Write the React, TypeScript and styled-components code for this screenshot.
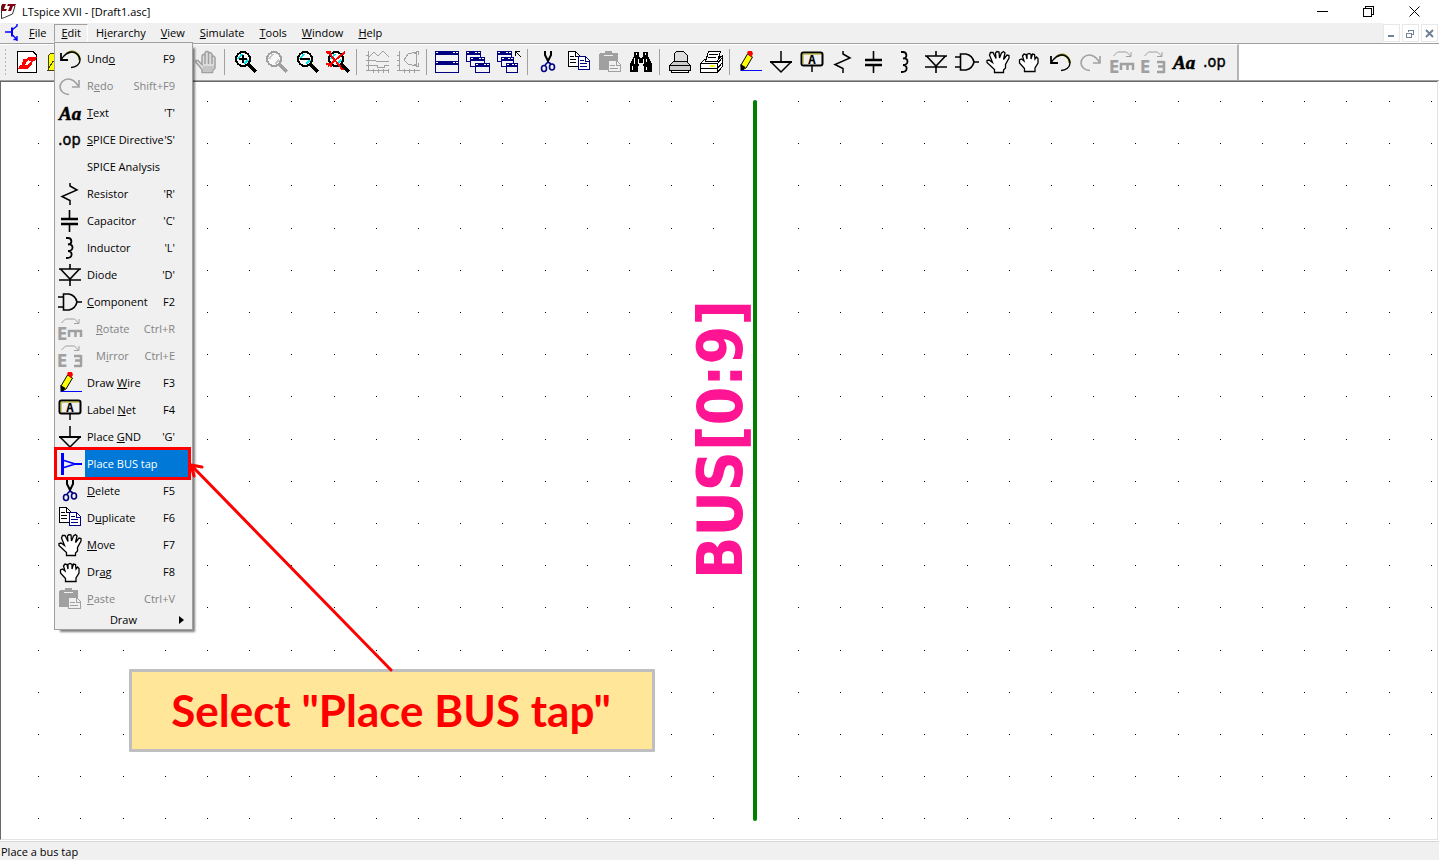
import React from 'react';
import styled, { createGlobalStyle } from 'styled-components';

const GlobalStyle = createGlobalStyle`
  * { box-sizing: border-box; }
  body {
    margin: 0;
    background: #ffffff;
    color: #000000;
    font-family: "Open Sans", "Noto Sans", sans-serif;
    font-size: 11px;
    line-height: 16px;
  }
  button { font: inherit; color: inherit; }
`;

const Window = styled.div`
  position: relative;
  display: flex;
  flex-direction: column;
  min-height: 100vh;
  overflow: hidden;
`;

const TitleBar = styled.header`
  display: flex;
  align-items: center;
  height: 23px;
  background: #ffffff;
`;

const Title = styled.h1`
  flex: 1;
  margin: 0 0 0 6px;
  font-size: 11px;
  font-weight: 400;
`;

const CaptionButtons = styled.div`
  display: flex;
  padding-right: 2px;
`;

const CaptionButton = styled.button`
  display: flex;
  align-items: center;
  justify-content: center;
  width: 46px;
  height: 20px;
  padding: 0;
  border: 0;
  background: transparent;
`;

const MenuBar = styled.nav`
  display: flex;
  align-items: center;
  height: 20px;
  padding-left: 4px;
  background: #f0f0f0;
`;

const MenuList = styled.div`
  display: flex;
  flex: 1;
  gap: 1px;
  padding-left: 2px;
`;

const MenuTitle = styled.button<{ $open?: boolean }>`
  height: 18px;
  padding: 0 6px;
  border: 1px solid transparent;
  border-color: ${(p) => (p.$open ? '#a0a0a0 #ffffff #f0f0f0 #a0a0a0' : 'transparent')};
  background: transparent;
  line-height: 16px;
  white-space: nowrap;
`;

const MdiButtons = styled.div`
  display: flex;
  gap: 2px;
  height: 20px;
  padding: 1px 1px 0 0;
  background: #ffffff;
`;

const MdiButton = styled.button`
  display: flex;
  align-items: center;
  justify-content: center;
  width: 17px;
  height: 18px;
  padding: 0;
  border: 1px solid #e8e8e8;
  background: #ffffff;
`;

const ToolRow = styled.div`
  display: flex;
  height: 37px;
  border-top: 1px solid #a0a0a0;
  background: #ffffff;
`;

const ToolBar = styled.div`
  display: flex;
  align-items: center;
  padding: 0 7px 1px 4px;
  border-top: 1px solid #ffffff;
  border-right: 2px solid #b4b4b4;
  background: #f0f0f0;
`;

const Grip = styled.span`
  width: 7px;
  height: 28px;
  background-image: radial-gradient(circle, #b8b8b8 1px, transparent 1px);
  background-size: 3px 4px;
  background-repeat: repeat-y;
`;

const ToolButton = styled.button`
  display: flex;
  align-items: center;
  justify-content: center;
  flex: none;
  width: 31px;
  height: 28px;
  padding: 0;
  border: 0;
  background: transparent;
`;

const Separator = styled.span`
  flex: none;
  width: 2px;
  height: 26px;
  margin: 0 3px;
  border-left: 1px solid #a0a0a0;
`;

const Sheet = styled.main`
  display: flex;
  flex: 1;
  margin-right: 1px;
  border-top: 1px solid #696969;
  border-left: 1px solid #696969;
  border-right: 1px solid #e3e3e3;
  border-bottom: 1px solid #e3e3e3;
  background: #ffffff;
`;

const SheetEdge = styled.div`
  height: 1px;
  background: #a0a0a0;
`;

const Drawing = styled.svg`
  flex: 1;
  display: block;
  min-width: 0;
  min-height: 757px;
`;

const StatusBar = styled.footer`
  height: 19px;
  margin-top: 1px;
  padding: 2px 1px 0;
  border-top: 1px solid #d7d7d7;
  background: #f0f0f0;
`;

const DropDown = styled.div`
  position: absolute;
  left: 54px;
  top: 42px;
  display: flex;
  flex-direction: column;
  width: 139px;
  padding: 2px 2px 1px 3px;
  border: 1px solid #a0a0a0;
  background: #f0f0f0;
  box-shadow: 4px 4px 2px -2px rgba(0, 0, 0, 0.5);
`;

const Command = styled.button<{ $disabled?: boolean; $selected?: boolean }>`
  display: flex;
  align-items: center;
  height: 27px;
  padding: 0;
  border: 0;
  background: transparent;
  color: ${(p) => (p.$selected ? '#ffffff' : p.$disabled ? '#838383' : '#000000')};
  white-space: nowrap;
  text-align: left;
`;

const IconCell = styled.span`
  display: flex;
  flex: none;
  align-items: center;
  width: 27px;
`;

const CommandBody = styled.span<{ $selected?: boolean; $indent?: boolean }>`
  display: flex;
  flex: 1;
  align-items: center;
  min-width: 0;
  height: 27px;
  padding: 0 15px 0 ${(p) => (p.$indent ? '11px' : '2px')};
  background: ${(p) => (p.$selected ? '#0078d7' : 'transparent')};
`;

const CommandLabel = styled.span`
  flex: 1;
  min-width: 0;
`;

const SubMenu = styled.button`
  display: flex;
  align-items: center;
  justify-content: flex-end;
  gap: 42px;
  height: 16px;
  padding: 0 6px 0 0;
  border: 0;
  background: transparent;
  line-height: 16px;
`;

const Highlight = styled.div`
  position: absolute;
  left: 54px;
  top: 447px;
  width: 137px;
  height: 33px;
  border: 3px solid #ff0000;
`;

const Pointer = styled.svg`
  position: absolute;
  left: 180px;
  top: 456px;
`;

const Callout = styled.p`
  position: absolute;
  left: 129px;
  top: 669px;
  width: 526px;
  margin: 0;
  padding: 14px 2px 14px 0;
  border: 3px solid #bfbfbf;
  border-radius: 1px;
  background: #ffe699;
  color: #ff0000;
  font-family: Lato, "Open Sans", sans-serif;
  font-size: 44px;
  font-weight: 700;
  line-height: 49px;
  text-align: center;
  white-space: nowrap;
`;

const NAVY = '#000080';
const GREY = '#a0a0a0';

const Lens = ({ color = '#000', glint = '#00e5ee', children }: { color?: string; glint?: string; children?: React.ReactNode }) => (
  <g fill="none">
    <circle cx="10" cy="9" r="7" fill="#f8f8f8" stroke={color} strokeWidth="2" />
    <path d="M5 9l4-5M11 14l4-4" stroke={glint} strokeWidth="2" />
    <path d="M15 14l8 8" stroke={color} strokeWidth="4" />
    {children}
  </g>
);

const MiniWindow = ({ x, y, w, h }: { x: number; y: number; w: number; h: number }) => (
  <g>
    <rect x={x + 0.5} y={y + 0.5} width={w - 1} height={h - 1} fill="#f4f4f4" stroke={NAVY} />
    <rect x={x} y={y} width={w} height={4} fill={NAVY} />
    <path d={`M${x + 1} ${y + 1.5}h2M${x + w - 6} ${y + 1.5}h2M${x + w - 3} ${y + 1.5}h2`} stroke="#fff" />
  </g>
);

const turnArrow = <path d="M3.500 6l4-4h9l4 4M21 2v4.500h-5" fill="none" stroke={GREY} />;

const glyphs: Record<string, React.ReactNode> = {
  new: (
    <g>
      <path d="M2.500 1.500H18l3.500 3.500v17.500H2.500z" fill="#fff" stroke="#000" />
      <path d="M8 9h6l-4 7h5l-2 3H3l2-4h2zM13 7h9l-2 4h-2l-2 5h-6l4-6h-3z" fill="#f00" />
      <path d="M12 11h4l-3 4h-3z" fill="#fff" />
    </g>
  ),
  open: <path d="M2 20V6l3-3h6l2 2h8v15zM2 20l5-9h16l-4 9z" fill="#ffff00" stroke="#404000" />,
  save: <path d="M3 3h18v18H3zM7 3v7h10V3M7 21v-6h10v6" fill="none" stroke={NAVY} />,
  panel: <path d="M4 20l9-9M12 5l4-2 1 4 4 1-2 4-5-1-2-2z" fill="none" stroke="#000" strokeWidth="2" />,
  run: <path d="M5 21l5-8-4-2 9-8-3 7 4 2z" fill="#000" />,
  halt: (
    <g fill="none" stroke={GREY} strokeWidth="1.500">
      <path
        d="M8 22.500v-3L2 12.500v-2h2l4 4V6l1-1.500h2V3l1-1.500h2L15 3l1.500-.5L18 4v2h1.500L21 7.500V18l-2.500 3v1.500z"
        fill="#dcdcdc"
      />
      <path d="M11 4.500V14M14.500 3v11M18 6v8" />
      <path d="M9 16h11v2l-2 3.500H9z" fill="#c4c4c4" stroke="none" />
    </g>
  ),
  zoomIn: (
    <Lens>
      <path d="M10 5v8M6 9h8" stroke="#000" strokeWidth="2" />
    </Lens>
  ),
  pan: <Lens color={GREY} glint="#c8c8c8" />,
  zoomOut: (
    <Lens>
      <path d="M5 9h10" stroke="#000" strokeWidth="2" />
    </Lens>
  ),
  zoomFit: (
    <Lens>
      <path d="M0 2h5M2 1v3M3 3l14 17M19 2L2 16M0 14h5v3" stroke="#f00" strokeWidth="2" />
    </Lens>
  ),
  autorange: (
    <path
      d="M3.500 1v20M1 5.500h3M1 10.500h3M1 15.500h3M1 20.500h23M8.500 19v4M13.500 19v4M18.500 19v4M23.500 19v4M4 7l5-5 4 4 5-5 6 6M4 11c4-3 7 1 10 1s6 0 10-1M4 15h8v2h7v-2h5"
      fill="none"
      stroke={GREY}
    />
  ),
  pole: (
    <path
      d="M3.500 1v20M1 5.500h3M1 10.500h3M1 15.500h3M1 20.500h23M8.500 19v4M13.500 19v4M18.500 19v4M8 10l4-6 8-2v14l-8-2zM18 4l5-3M18 14l5 3M22 1v4M22 13v4M8 8v3"
      fill="none"
      stroke={GREY}
    />
  ),
  tile: (
    <g>
      <MiniWindow x={0} y={1} w={24} h={11} />
      <MiniWindow x={0} y={11} w={24} h={12} />
    </g>
  ),
  cascade: (
    <g>
      <MiniWindow x={0} y={1} w={15} h={11} />
      <MiniWindow x={4} y={7} w={15} h={10} />
      <MiniWindow x={9} y={13} w={15} h={10} />
    </g>
  ),
  closeAll: (
    <g>
      <MiniWindow x={0} y={1} w={15} h={11} />
      <MiniWindow x={4} y={7} w={13} h={10} />
      <MiniWindow x={9} y={13} w={12} h={10} />
      <path d="M24 7l-5-5M18.500 6V1.500H23" fill="none" stroke="#000" strokeWidth="1" />
    </g>
  ),
  cut: (
    <g fill="none">
      <path d="M9 1v4l3 6M15 1v4l-3 6" stroke="#000" strokeWidth="2" />
      <path d="M12 10v3" stroke="#000" strokeWidth="2" />
      <ellipse cx="8" cy="18.500" rx="2.500" ry="3" stroke={NAVY} strokeWidth="1.600" />
      <ellipse cx="16" cy="17" rx="2.500" ry="3" stroke={NAVY} strokeWidth="1.600" />
      <path d="M9 15l3-3 3 2" stroke={NAVY} strokeWidth="1.600" />
    </g>
  ),
  copy: (
    <g>
      <path d="M1.500 1.500h7l4 4v11h-11z" fill="#fff" stroke="#000" />
      <path d="M8.500 2v4H12M3 6.500h4M3 9.500h6M3 12.500h6" fill="none" stroke="#000" />
      <path d="M11.500 6.500h7l4 4v9h-11z" fill="#fff" stroke={NAVY} />
      <path d="M18.500 7v4H22M13 10.500h4M13 13.500h7M13 16.500h7" fill="none" stroke={NAVY} />
    </g>
  ),
  paste: (
    <g>
      <path d="M1 4l1-1h5V1h7v2h5l1 1v16H1z" fill={GREY} />
      <path d="M6 5.500h9" stroke="#f0f0f0" />
      <path d="M10.500 10.500h8l4 4v7h-12z" fill="#f0f0f0" stroke={GREY} />
      <path d="M18.500 11v4H22M12 15.500h5M12 18.500h8" fill="none" stroke={GREY} />
    </g>
  ),
  find: (
    <g>
      <path d="M5 2h5v4l1 2h2l1-2V2h5v4l4 8v8h-8v-6h-1v-3h-4v3H9v6H1v-8l4-8z" fill="#000" />
      <path d="M7 3v2M16 3v2M5.500 8v6M9.500 9v5M14.500 9v5M3 16v4M17.500 9v3M17 17v3" stroke="#fff" />
    </g>
  ),
  print: (
    <g stroke="#000">
      <path d="M6.500 11.500v-8l2-2h7l4 4v6" fill="#ddd" />
      <path d="M1.500 20.500v-5l4-4h13l4 4v5z" fill="#ccc" />
      <path d="M3.500 20.500h17v2h-17zM2 15.500h20" fill="#fff" />
    </g>
  ),
  printSetup: (
    <g stroke="#000" fill="#fff">
      <path d="M1.500 13.500l4-4h13l5-4v11l-5 6h-17z" />
      <path d="M6.500 11.500l3-10h12l-3 10z" />
      <path d="M10 4.500h9M9 7.500h8" />
      <path d="M1.500 13.500h17v9M18.500 13.500l5-6M1.500 18.500h17l5-6" fill="none" />
      <path d="M11 16h5" stroke="#ff0" strokeWidth="2" />
    </g>
  ),
  wire: (
    <g>
      <path d="M3 15L9.500 4l5 3L8 18l-4 2z" fill="#ff0" stroke="#000" />
      <path d="M9 3l1-2h4l1 3-2 3z" fill="#f00" />
      <path d="M2.500 14l5 3-3 4h-2z" fill="#000" />
      <path d="M3 20.500h21" stroke="#00f" />
    </g>
  ),
  ground: (
    <g fill="none" stroke="#000">
      <path d="M12 1v10M2 12l10 10 10-10" strokeWidth="1.500" />
      <path d="M1 12h22" strokeWidth="2" />
    </g>
  ),
  label: (
    <g>
      <path d="M12 16v6" stroke="#000" strokeWidth="1.500" />
      <rect x="1.500" y="2.500" width="21" height="13" rx="2" fill="#f0f0f0" stroke="#000" strokeWidth="2" />
      <path d="M3 14.500V4h18" fill="none" stroke="#a0a000" />
      <text x="12" y="14" textAnchor="middle" fontFamily="DejaVu Sans Mono" fontWeight="700" fontSize="13">A</text>
    </g>
  ),
  resistor: <path d="M12 1v3l7 4L4 14.500l8 4V23" fill="none" stroke="#000" strokeWidth="1.500" />,
  capacitor: (
    <g stroke="#000">
      <path d="M11.500 1v9M11.500 16v7" strokeWidth="1.600" />
      <path d="M3 10h17M3 15h17" strokeWidth="2.600" />
    </g>
  ),
  inductor: (
    <path
      d="M8 2h2c4 0 5 6 0 6.500c6-1 6 6.500 0 6.500c5 0 5 7-1 7H8"
      fill="none"
      stroke="#000"
      strokeWidth="1.800"
    />
  ),
  diode: (
    <path d="M12 1v5M12 17v6M1 6h22M2.500 6l9.500 10L21.500 6M1 17h22" fill="none" stroke="#000" strokeWidth="1.600" />
  ),
  component: (
    <path
      d="M0 7h6M0 17h6M5.500 4H11c5 1 7 4 8 8c-1 4-3 7-8 8H5.500zM19 12h5"
      fill="none"
      stroke="#000"
      strokeWidth="1.600"
    />
  ),
  move: (
    <path
      d="M8.500 22.500V19.500L1 12.500V10.500L3 10L6.500 12.500L3.500 5L4.500 2.500H7L10 8.500L9.500 3L11 1.500L13 2L13.500 8L15.500 3L17.500 1.500L19 3L17.500 9.500L21 5L23 5.500V8L19.500 14.500V18L17.500 20V22.500z"
      fill="#fff"
      stroke="#000"
      strokeWidth="1.300"
    />
  ),
  drag: (
    <path
      d="M7.500 21.500V18.500L2.500 13V10L4.500 9L7 11L5.500 6L7 4L9 4.500L10 9V4.500L12 3.500L14 4.500V9L15.500 4L17.500 4.500L18 9L19.500 7L21 8.500V13L18 18V21.500z"
      fill="#fff"
      stroke="#000"
      strokeWidth="1.300"
    />
  ),
  undo: (
    <g fill="none">
      <path d="M9 6.500C16 2 21.500 7 21.500 13" stroke="#808000" strokeWidth="2.200" />
      <path d="M3.500 12C7 7 10 5 13.500 5c5 0 8.500 4 8.500 8s-4 7.500-9 7.500" stroke="#000" strokeWidth="1.400" />
      <path d="M3 6v7h7" stroke="#000" strokeWidth="1.800" />
    </g>
  ),
  redo: (
    <g fill="none" stroke={GREY} strokeWidth="1.600">
      <path d="M20.500 12C17 7 14 5 10.500 5C5.500 5 2 9 2 13s4 7.500 9 7.500" />
      <path d="M21 6v7h-7" />
    </g>
  ),
  rotate: (
    <g>
      {turnArrow}
      <text x="-1" y="23" fontFamily="DejaVu Sans Condensed" fontWeight="700" fontSize="17" fill={GREY}>E</text>
      <path d="M10 14h14M11 13v7M17.500 13v7M23 13v7" fill="none" stroke={GREY} strokeWidth="2.500" />
    </g>
  ),
  mirror: (
    <g>
      {turnArrow}
      <text x="-1" y="23" fontFamily="DejaVu Sans Condensed" fontWeight="700" fontSize="17" fill={GREY}>E</text>
      <path d="M23 11v12M16 12h7M17 16.500h6M16 22h7" fill="none" stroke={GREY} strokeWidth="2.500" />
    </g>
  ),
  text: (
    <text x="1" y="19" fontFamily="Liberation Serif" fontWeight="700" fontStyle="italic" fontSize="19" stroke="#000" strokeWidth="0.500">Aa</text>
  ),
  directive: (
    <text x="0" y="17" fontFamily="DejaVu Sans Condensed" fontSize="16" stroke="#000" strokeWidth="0.400">.op</text>
  ),
  busTap: (
    <g fill="none" stroke="#00f" strokeWidth="2">
      <path d="M4.500 1v22" strokeWidth="3" />
      <path d="M6 8.500L17 12L6 15.500M15 12h9" strokeWidth="1.800" />
    </g>
  ),
};

const pixelated = ['new', 'open', 'save', 'autorange', 'pole', 'tile', 'cascade', 'closeAll', 'copy', 'paste', 'find', 'print', 'printSetup', 'zoomIn', 'pan', 'zoomOut', 'zoomFit'];

const Icon = ({ name }: { name: string }) => (
  <svg
    width="24"
    height="24"
    viewBox="0 0 24 24"
    overflow="visible"
    shapeRendering={pixelated.includes(name) ? 'crispEdges' : 'auto'}
    aria-hidden="true"
  >
    {glyphs[name]}
  </svg>
);

const tools = [
  ['new', 'open', 'save'],
  ['panel'],
  ['run'],
  ['halt'],
  ['zoomIn', 'pan', 'zoomOut', 'zoomFit'],
  ['autorange', 'pole'],
  ['tile', 'cascade', 'closeAll'],
  ['cut', 'copy', 'paste', 'find'],
  ['print', 'printSetup'],
  ['wire', 'ground', 'label', 'resistor', 'capacitor', 'inductor', 'diode', 'component', 'move', 'drag', 'undo', 'redo', 'rotate', 'mirror', 'text', 'directive'],
];

/* An underscore stands before the access-key letter. */
const Mnemonic = ({ text }: { text: string }) => {
  const at = text.indexOf('_');
  if (at < 0) return <>{text}</>;
  return (
    <>
      {text.slice(0, at)}
      <u>{text[at + 1]}</u>
      {text.slice(at + 2)}
    </>
  );
};

const menus = ['_File', '_Edit', 'H_ierarchy', '_View', '_Simulate', '_Tools', '_Window', '_Help'];

type Entry = { icon?: string; label: string; keys?: string; disabled?: boolean; selected?: boolean; indent?: boolean };

const entries: Entry[] = [
  { icon: 'undo', label: 'Und_o', keys: 'F9' },
  { icon: 'redo', label: 'R_edo', keys: 'Shift+F9', disabled: true },
  { icon: 'text', label: '_Text', keys: "'T'" },
  { icon: 'directive', label: '_SPICE Directive', keys: "'S'" },
  { label: 'SPICE Analysis' },
  { icon: 'resistor', label: 'Resistor', keys: "'R'" },
  { icon: 'capacitor', label: 'Capacitor', keys: "'C'" },
  { icon: 'inductor', label: 'Inductor', keys: "'L'" },
  { icon: 'diode', label: 'Diode', keys: "'D'" },
  { icon: 'component', label: '_Component', keys: 'F2' },
  { icon: 'rotate', label: '_Rotate', keys: 'Ctrl+R', disabled: true, indent: true },
  { icon: 'mirror', label: 'M_irror', keys: 'Ctrl+E', disabled: true, indent: true },
  { icon: 'wire', label: 'Draw _Wire', keys: 'F3' },
  { icon: 'label', label: 'Label _Net', keys: 'F4' },
  { icon: 'ground', label: 'Place _GND', keys: "'G'" },
  { icon: 'busTap', label: 'Place BUS tap', selected: true },
  { icon: 'cut', label: '_Delete', keys: 'F5' },
  { icon: 'copy', label: 'D_uplicate', keys: 'F6' },
  { icon: 'move', label: '_Move', keys: 'F7' },
  { icon: 'drag', label: 'Dr_ag', keys: 'F8' },
  { icon: 'paste', label: '_Paste', keys: 'Ctrl+V', disabled: true },
];

const PITCH = 42.2;
const dotPath = Array.from({ length: 18 }, (_, row) =>
  Array.from({ length: 60 }, (_, col) => `M${Math.floor(37.6 + col * PITCH)} ${Math.round(19 + row * PITCH)}h1v1h-1z`).join(''),
).join('');

export default function App() {
  return (
    <Window>
      <GlobalStyle />
      <TitleBar>
        <svg width="16" height="18" viewBox="0 0 16 18" aria-hidden="true">
          <path d="M1.500 2.500v13l3-1 8-3.500 2.500-8" fill="#fff" stroke="#333" />
          <path d="M2 1h4L4 6h3l-1 2H1l1-2zM8 1h8l-1 2h-2l-2 5H8l2-5H7z" fill="#800010" />
        </svg>
        <Title>LTspice XVII - [Draft1.asc]</Title>
        <CaptionButtons>
          <CaptionButton aria-label="Minimize">
            <svg width="12" height="12" shapeRendering="crispEdges"><path d="M1 5.500h11" stroke="#000" /></svg>
          </CaptionButton>
          <CaptionButton aria-label="Restore">
            <svg width="11" height="12" fill="none" stroke="#000" shapeRendering="crispEdges">
              <path d="M.5 2.500h8v8h-8zM2.500 2V.5h8v8H9" />
            </svg>
          </CaptionButton>
          <CaptionButton aria-label="Close">
            <svg width="11" height="12"><path d="M.5.5l10 10M10.500.5l-10 10" stroke="#000" /></svg>
          </CaptionButton>
        </CaptionButtons>
      </TitleBar>

      <MenuBar aria-label="Main menu">
        <svg width="16" height="18" viewBox="0 0 16 18" fill="none" stroke="#0000ff" aria-hidden="true">
          <path d="M8 3.500v9" strokeWidth="2" />
          <path d="M1 8h7M8 6l5-4V0M8 10.500l5 5M9.500 15.500h4M13 12v5" strokeWidth="1.400" />
        </svg>
        <MenuList>
          {menus.map((m) => (
            <MenuTitle key={m} $open={m === '_Edit'}>
              <Mnemonic text={m} />
            </MenuTitle>
          ))}
        </MenuList>
        <MdiButtons>
          <MdiButton aria-label="Minimize document">
            <svg width="9" height="9"><path d="M1 7h6" stroke="#6f8294" strokeWidth="2" /></svg>
          </MdiButton>
          <MdiButton aria-label="Restore document">
            <svg width="9" height="9" fill="none" stroke="#6f8294" shapeRendering="crispEdges">
              <path d="M.5 4.500h5v4h-5zM0 4h6M2.500 3V1.500h5v4H6M2 1h6" />
            </svg>
          </MdiButton>
          <MdiButton aria-label="Close document">
            <svg width="9" height="9"><path d="M1 1l7 7M8 1L1 8" stroke="#6f8294" strokeWidth="2" /></svg>
          </MdiButton>
        </MdiButtons>
      </MenuBar>

      <ToolRow>
        <ToolBar role="toolbar">
          <Grip />
          {tools.map((group, g) => (
            <React.Fragment key={g}>
              {g > 0 && <Separator />}
              {group.map((name) => (
                <ToolButton key={name} aria-label={name}>
                  <Icon name={name} />
                </ToolButton>
              ))}
            </React.Fragment>
          ))}
        </ToolBar>
      </ToolRow>

      <SheetEdge />
      <Sheet>
        <Drawing>
          <path d={dotPath} fill="#000" shapeRendering="crispEdges" />
          <text
            transform="translate(741 497) rotate(-90)"
            fontFamily='"DejaVu Sans Condensed", "DejaVu Sans"'
            fontWeight="700"
            fontSize="62"
            fill="#ff1493"
          >
            BUS[0:9]
          </text>
          <rect x="752" y="18" width="4" height="721" rx="2" fill="#008000" />
        </Drawing>
      </Sheet>

      <StatusBar>Place a bus tap</StatusBar>

      <DropDown>
        {entries.map((e) => (
          <Command key={e.label} $disabled={e.disabled} $selected={e.selected}>
            <IconCell>{e.icon && <Icon name={e.icon} />}</IconCell>
            <CommandBody $selected={e.selected} $indent={e.indent}>
              <CommandLabel>
                <Mnemonic text={e.label} />
              </CommandLabel>
              {e.keys && <span>{e.keys}</span>}
            </CommandBody>
          </Command>
        ))}
        <SubMenu>
          <span>Draw</span>
          <svg width="5" height="8" aria-hidden="true"><path d="M0 0l5 4-5 4z" /></svg>
        </SubMenu>
      </DropDown>

      <Highlight />
      <Callout>Select "Place BUS tap"</Callout>
      <Pointer width="216" height="220" fill="none" stroke="#ff0000" strokeWidth="3" strokeLinecap="round" aria-hidden="true">
        <path d="M211 214L11 9M22 11L11 9l3 11" />
      </Pointer>
    </Window>
  );
}
